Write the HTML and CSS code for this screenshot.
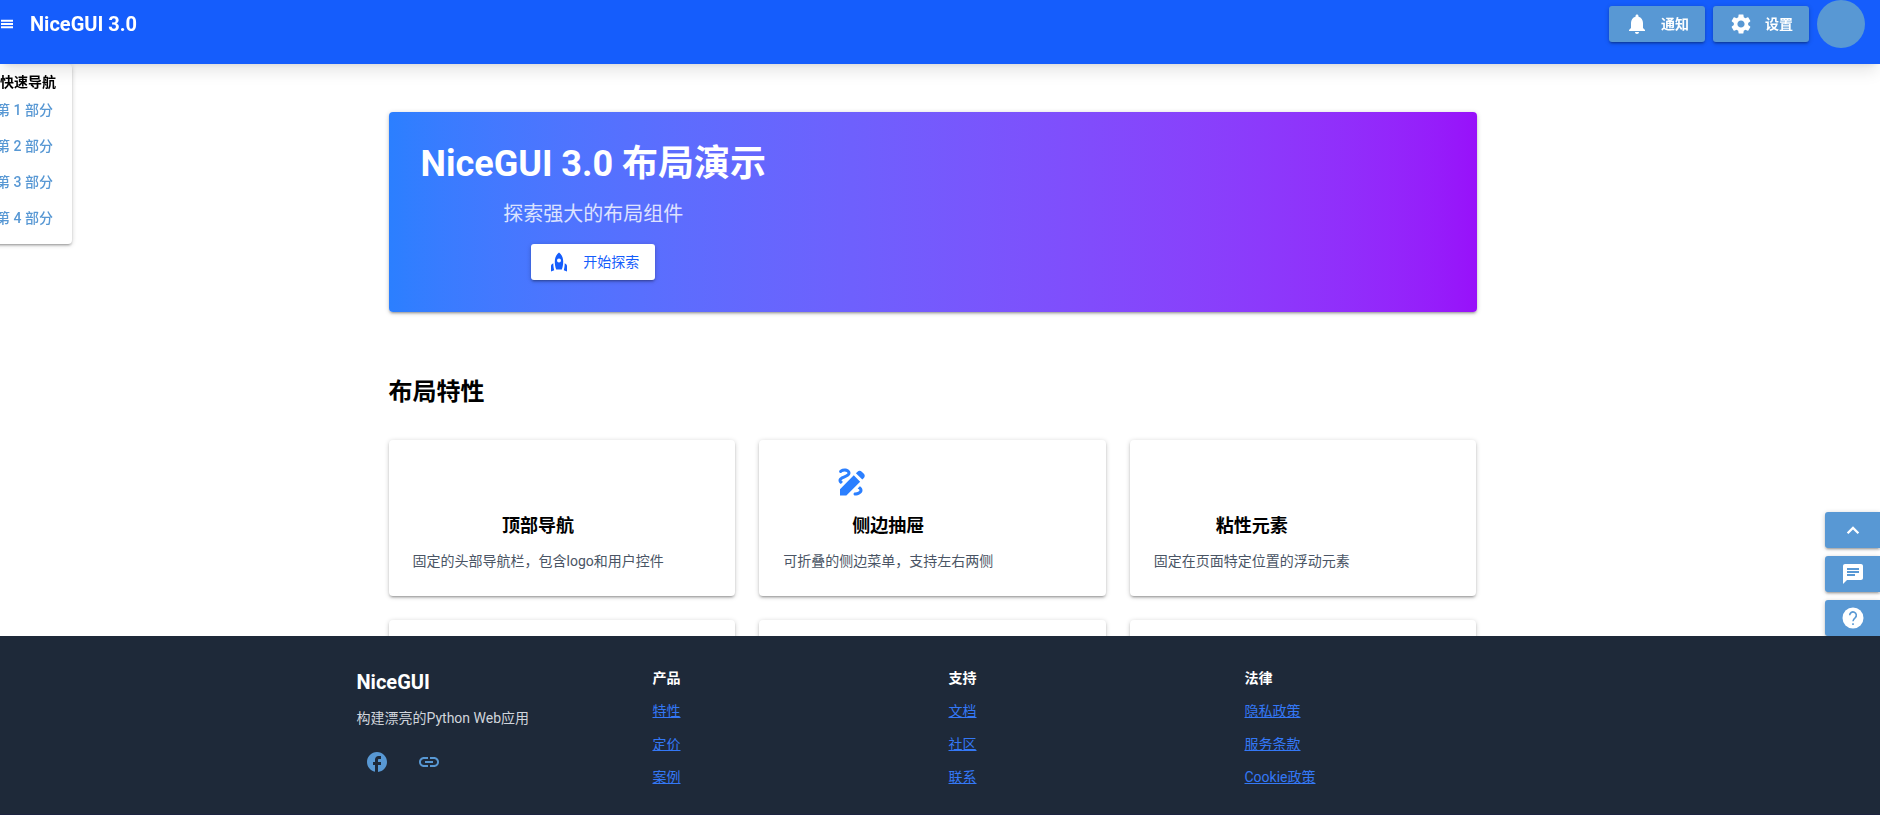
FILE: index.html
```
<!DOCTYPE html>
<html lang="zh-CN">
<head>
    <meta charset="UTF-8">
    <meta name="viewport" content="width=device-width, initial-scale=1.0">
    <title>NiceGUI 3.0</title>
    <link rel="stylesheet" href="styles.css">
</head>
<body>
    <header class="header">
        <button class="menu-button" aria-label="菜单">
            <svg class="icon-small" viewBox="0 0 24 24"><path d="M3 18.500h18v-3H3v3zm0-5h18v-3H3v3zm0-8v3h18v-3H3z"/></svg>
        </button>
        <span class="brand">NiceGUI 3.0</span>
        <div class="header-actions">
            <button class="btn btn-bold">
                <svg class="icon" viewBox="0 0 24 24"><path d="M12 22c1.1 0 2-.9 2-2h-4c0 1.1.89 2 2 2zm6-6v-5c0-3.07-1.64-5.64-4.5-6.32V4c0-.83-.67-1.5-1.5-1.5s-1.5.67-1.5 1.5v.68C7.63 5.36 6 7.92 6 11v5l-2 2v1h16v-1l-2-2z"/></svg>
                通知
            </button>
            <button class="btn btn-bold">
                <svg class="icon" viewBox="0 0 24 24"><path d="M19.14 12.94c.04-.3.06-.61.06-.94 0-.32-.02-.64-.07-.94l2.03-1.58c.18-.14.23-.41.12-.61l-1.92-3.32c-.12-.22-.37-.29-.59-.22l-2.39.96c-.5-.38-1.03-.7-1.62-.94l-.36-2.54c-.04-.24-.24-.41-.48-.41h-3.84c-.24 0-.43.17-.47.41l-.36 2.54c-.59.24-1.13.57-1.62.94l-2.39-.96c-.22-.08-.47 0-.59.22L2.74 8.87c-.12.21-.08.47.12.61l2.03 1.58c-.05.3-.09.63-.09.94s.02.64.07.94l-2.03 1.58c-.18.14-.23.41-.12.61l1.92 3.32c.12.22.37.29.59.22l2.39-.96c.5.38 1.03.7 1.62.94l.36 2.54c.05.24.24.41.48.41h3.84c.24 0 .44-.17.47-.41l.36-2.54c.59-.24 1.13-.56 1.62-.94l2.39.96c.22.08.47 0 .59-.22l1.92-3.32c.12-.22.07-.47-.12-.61l-2.01-1.58zM12 15.6c-1.98 0-3.6-1.62-3.6-3.6s1.62-3.6 3.6-3.6 3.6 1.62 3.6 3.6-1.62 3.6-3.6 3.6z"/></svg>
                设置
            </button>
            <div class="avatar"></div>
        </div>
    </header>

    <nav class="quick-nav">
        <div class="quick-nav-title">快速导航</div>
        <button class="quick-nav-item">第 1 部分</button>
        <button class="quick-nav-item">第 2 部分</button>
        <button class="quick-nav-item">第 3 部分</button>
        <button class="quick-nav-item">第 4 部分</button>
    </nav>

    <main class="content">
        <section class="hero">
            <div class="hero-inner">
                <h1>NiceGUI 3.0 布局演示</h1>
                <p>探索强大的布局组件</p>
                <button class="btn btn-white">
                    <svg class="icon" viewBox="0 0 24 24"><path fill-rule="evenodd" d="M12 2.500c-2.600 2-4.200 5.200-4.200 9 0 3 .5 5.600 1.400 8h5.600c.9-2.400 1.400-5 1.400-8 0-3.800-1.600-7-4.200-9zM12 12.500a2 2 0 1 1 0-4 2 2 0 0 1 0 4zM6.300 13.200l-1.500 1.100c-.500.400-.8 1-.8 1.700v5.500l3.200-1.300c-.500-1.900-.9-4.400-.9-7zM17.700 13.200l1.500 1.100c.5.400.8 1 .8 1.700v5.500l-3.200-1.300c.5-1.900.9-4.400.9-7z"/></svg>
                    开始探索
                </button>
            </div>
        </section>

        <h2>布局特性</h2>
        <section class="features">
            <article class="card">
                <div class="feature">
                    <div class="feature-icon"></div>
                    <h3>顶部导航</h3>
                    <p>固定的头部导航栏，包含logo和用户控件</p>
                </div>
            </article>
            <article class="card">
                <div class="feature">
                    <div class="feature-icon">
                        <svg viewBox="0 0 24 24"><path d="M18.850 10.390l1.060-1.060c.780-.780.780-2.050 0-2.830L18.500 5.090c-.780-.780-2.050-.780-2.830 0l-1.060 1.060 4.240 4.240zm-5.660-2.830L4 16.760V21h4.240l9.190-9.190-4.240-4.250zM19 17.500c0 2.190-2.540 3.500-5 3.500-.550 0-1-.450-1-1s.450-1 1-1c1.540 0 3-.730 3-1.500 0-.470-.480-.870-1.230-1.200l1.480-1.480c1.070.630 1.750 1.470 1.750 2.680zM4.580 13.350C3.610 12.790 3 12.060 3 11c0-1.800 1.890-2.630 3.560-3.360C7.590 7.180 9 6.560 9 6c0-.410-.780-1-2-1-1.260 0-1.800.610-1.830.640-.350.410-.980.460-1.400.120-.410-.340-.490-.950-.150-1.380C3.730 4.240 4.760 3 7 3s4 1.320 4 3c0 1.870-1.930 2.720-3.640 3.470C6.420 9.880 5 10.500 5 11c0 .310.430.600 1.070.860l-1.490 1.490z"/></svg>
                    </div>
                    <h3>侧边抽屉</h3>
                    <p>可折叠的侧边菜单，支持左右两侧</p>
                </div>
            </article>
            <article class="card">
                <div class="feature">
                    <div class="feature-icon"></div>
                    <h3>粘性元素</h3>
                    <p>固定在页面特定位置的浮动元素</p>
                </div>
            </article>
            <article class="card"></article>
            <article class="card"></article>
            <article class="card"></article>
        </section>
    </main>

    <div class="page-tools">
        <button class="btn" aria-label="返回顶部">
            <svg class="icon" viewBox="0 0 24 24"><path d="M7.400 16L12 11.400l4.600 4.600L18.200 14.400 12 8.200l-6.200 6.200z"/></svg>
        </button>
        <button class="btn" aria-label="聊天">
            <svg class="icon" viewBox="0 0 24 24"><path d="M20 2H4c-1.100 0-1.990.9-1.990 2L2 22l4-4h14c1.100 0 2-.9 2-2V4c0-1.100-.9-2-2-2zM6 9h12v2H6V9zm8 5H6v-2h8v2zm4-6H6V6h12v2z"/></svg>
        </button>
        <button class="btn" aria-label="帮助">
            <svg class="icon" viewBox="0 0 24 24">
                <circle cx="12" cy="12" r="10.500"/>
                <path class="help-mark" d="M8.700 9.300a3.300 3.300 0 1 1 5.500 2.400c-1.300 1.100-2.200 1.800-2.200 3.600M12 17.200v1.800"/>
            </svg>
        </button>
    </div>

    <footer class="footer">
        <div class="footer-grid">
            <div class="footer-column">
                <div class="footer-brand">NiceGUI</div>
                <p>构建漂亮的Python Web应用</p>
                <div class="social">
                    <button aria-label="Facebook">
                        <svg class="icon" viewBox="0 0 24 24"><path d="M22 12c0-5.520-4.480-10-10-10S2 6.480 2 12c0 4.840 3.440 8.870 8 9.800V15H8v-3h2V9.500C10 7.570 11.570 6 13.500 6H16v3h-2c-.550 0-1 .450-1 1v2h3v3h-3v6.950c5.050-.5 9-4.760 9-9.950z"/></svg>
                    </button>
                    <button aria-label="链接">
                        <svg class="icon" viewBox="0 0 24 24"><path d="M3.900 12c0-1.710 1.390-3.100 3.100-3.100h4V7H7c-2.760 0-5 2.240-5 5s2.240 5 5 5h4v-1.900H7c-1.710 0-3.100-1.390-3.100-3.100zM8 13h8v-2H8v2zm9-6h-4v1.900h4c1.710 0 3.100 1.390 3.100 3.100s-1.390 3.100-3.100 3.100h-4V17h4c2.760 0 5-2.240 5-5s-2.240-5-5-5z"/></svg>
                    </button>
                </div>
            </div>
            <div class="footer-column">
                <h4>产品</h4>
                <a href="#">特性</a>
                <a href="#">定价</a>
                <a href="#">案例</a>
            </div>
            <div class="footer-column">
                <h4>支持</h4>
                <a href="#">文档</a>
                <a href="#">社区</a>
                <a href="#">联系</a>
            </div>
            <div class="footer-column">
                <h4>法律</h4>
                <a href="#">隐私政策</a>
                <a href="#">服务条款</a>
                <a href="#">Cookie政策</a>
            </div>
        </div>
    </footer>
</body>
</html>
```
FILE: styles.css
```
* {
    box-sizing: border-box;
}

html {
    height: 100%;
    overflow: hidden;
}

body {
    height: 100%;
    margin: 0;
    overflow: hidden;
    background: #fff;
    color: #000;
    font-family: Roboto, "Noto Sans CJK SC", sans-serif;
    font-size: 14px;
    line-height: 21px;
}

h1, h2, h3, h4, p {
    margin: 0;
}

button {
    border: none;
    padding: 0;
    background: none;
    color: inherit;
    font: inherit;
    cursor: pointer;
}

svg {
    display: block;
    fill: currentColor;
}

.icon {
    width: 24px;
    height: 24px;
}

.icon-small {
    width: 16px;
    height: 16px;
}

.help-mark {
    fill: none;
    stroke: #5898d4;
    stroke-width: 1.6;
}

.header {
    position: fixed;
    top: 0;
    left: 0;
    right: 0;
    z-index: 3;
    display: flex;
    align-items: flex-start;
    height: 64px;
    padding-right: 15px;
    background: #155dfc;
    color: #fff;
    box-shadow: 0 10px 15px -3px rgba(0, 0, 0, 0.1), 0 4px 6px -4px rgba(0, 0, 0, 0.1);
}

.menu-button {
    display: flex;
    align-items: center;
    height: 48px;
    margin-left: -1px;
}

.brand {
    margin-left: 15px;
    font-size: 20px;
    font-weight: bold;
    line-height: 48px;
}

.header-actions {
    display: flex;
    align-items: center;
    gap: 8px;
    margin-left: auto;
}

.btn {
    display: flex;
    align-items: center;
    gap: 12px;
    height: 36px;
    padding: 0 16px;
    border-radius: 3px;
    background: #5898d4;
    color: #fff;
    line-height: 20px;
    box-shadow: 0 1px 5px rgba(0, 0, 0, 0.2), 0 2px 2px rgba(0, 0, 0, 0.14), 0 3px 1px -2px rgba(0, 0, 0, 0.12);
}

.btn-bold {
    font-weight: bold;
}

.btn-white {
    background: #fff;
    color: #155dfc;
}

.avatar {
    width: 48px;
    height: 48px;
    border-radius: 50%;
    background: #5898d4;
}

/* partly slid out past the left edge */
.quick-nav {
    position: fixed;
    top: 64px;
    left: -48px;
    z-index: 2;
    display: flex;
    flex-direction: column;
    width: 120px;
    padding: 8px 16px;
    border-radius: 4px;
    background: #fff;
    box-shadow: 0 1px 5px rgba(0, 0, 0, 0.2), 0 2px 2px rgba(0, 0, 0, 0.14), 0 3px 1px -2px rgba(0, 0, 0, 0.12);
}

.quick-nav-title {
    line-height: 20px;
    text-align: right;
    font-weight: bold;
}

.quick-nav-item {
    height: 36px;
    padding-right: 3px;
    color: #5898d4;
    font-weight: 500;
    text-align: right;
}

.content {
    max-width: 1167px;
    margin: 0 auto;
    padding: 112px 47px 0 32px;
}

.hero {
    display: flex;
    padding: 32px;
    border-radius: 4px;
    background: linear-gradient(to right in oklab, #2b7fff, #9810fa);
    color: #fff;
    box-shadow: 0 1px 5px rgba(0, 0, 0, 0.2), 0 2px 2px rgba(0, 0, 0, 0.14), 0 3px 1px -2px rgba(0, 0, 0, 0.12);
}

.hero-inner {
    display: flex;
    flex-direction: column;
    align-items: center;
    gap: 16px;
}

.hero h1 {
    font-size: 36px;
    line-height: 40px;
}

.hero p {
    font-size: 20px;
    line-height: 28px;
    opacity: 0.8;
}

h2 {
    margin: 64px 0 32px;
    font-size: 24px;
    line-height: 32px;
}

.features {
    display: grid;
    grid-template-columns: repeat(3, 1fr);
    gap: 24px;
}

.card {
    display: flex;
    min-height: 156px;
    padding: 24px;
    border-radius: 4px;
    background: #fff;
    box-shadow: 0 1px 5px rgba(0, 0, 0, 0.2), 0 2px 2px rgba(0, 0, 0, 0.14), 0 3px 1px -2px rgba(0, 0, 0, 0.12);
}

.feature {
    display: flex;
    flex-direction: column;
    align-items: center;
    gap: 12px;
}

.feature-icon {
    width: 108px;
    height: 36px;
    color: #2b7fff;
}

.feature-icon svg {
    width: 36px;
    height: 36px;
}

.feature h3 {
    font-size: 18px;
    line-height: 28px;
}

.feature p {
    color: #4a5565;
    line-height: 18px;
}

.page-tools {
    position: fixed;
    right: 0;
    bottom: 179px;
    z-index: 2;
    display: flex;
    flex-direction: column;
    gap: 8px;
}

.page-tools .btn {
    padding-right: 15px;
    border-radius: 3px 0 0 3px;
}

.footer {
    position: fixed;
    left: 0;
    right: 0;
    bottom: 0;
    z-index: 3;
    height: 179px;
    padding-top: 32px;
    border-bottom: 1px solid #1c2340;
    background: #1e2939;
    color: #fff;
}

.footer-grid {
    display: grid;
    grid-template-columns: repeat(4, 1fr);
    gap: 32px;
    max-width: 1167px;
    margin: 0 auto;
    padding-right: 15px;
}

.footer-column {
    display: flex;
    flex-direction: column;
    align-items: flex-start;
    gap: 12px;
}

.footer-brand {
    font-size: 20px;
    font-weight: bold;
    line-height: 28px;
}

.footer-column p {
    color: #d1d5dc;
}

.footer-column h4 {
    font-size: 14px;
}

.footer-column a {
    color: #3478f6;
    text-decoration: underline;
}

.social {
    display: flex;
    gap: 12px;
    color: #5898d4;
}

.social button {
    height: 42px;
    padding: 0 8px;
}
```
